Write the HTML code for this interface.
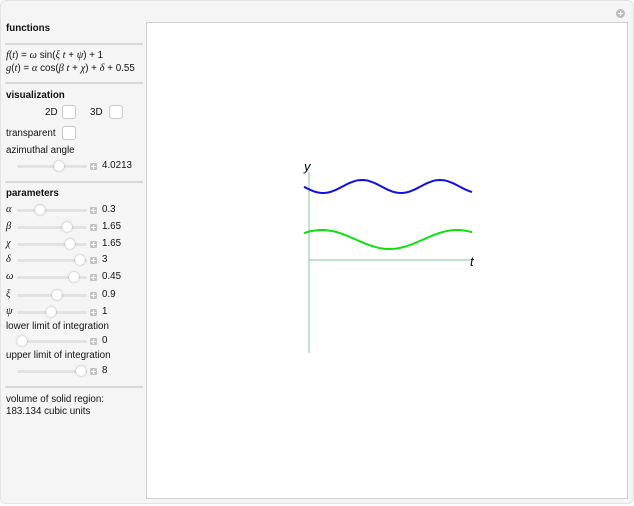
<!DOCTYPE html><html><head><style>
body{margin:0;width:634px;height:506px;background:#fff;font-family:"Liberation Sans",sans-serif;font-size:9.8px;color:#111;position:relative;overflow:hidden}
.frame{position:absolute;left:0;top:0;width:632px;height:502px;background:#f5f5f5;border:1px solid #e2e2e2;border-radius:6px}
.t{position:absolute;white-space:nowrap}
.b{font-weight:bold}
.sep{position:absolute;left:5px;width:138px;height:2px;background:#d8d8d8}
.track{position:absolute;height:3px;background:#e2e2e2;border-radius:2px}
.thumb{position:absolute;width:10px;height:10px;border-radius:50%;background:#fff;box-shadow:0 0 2px rgba(0,0,0,.35)}
.plus{position:absolute;width:7px;height:7px;background:#c4c4c4;border-radius:1px}
.plus:before{content:"";position:absolute;left:3px;top:1px;width:1px;height:5px;background:#fff}
.plus:after{content:"";position:absolute;left:1px;top:3px;width:5px;height:1px;background:#fff}
.cb{position:absolute;width:12px;height:12px;background:#fff;border:1px solid #c8c8c8;border-radius:3px}
.i{font-family:"Liberation Serif",serif;font-style:italic;font-size:10.5px}
.plot{position:absolute;left:146px;top:22px;width:480px;height:475px;background:#fff;border:1px solid #cfcfcf}
</style></head><body>
<div class="frame"></div>
<div style="position:absolute;left:616px;top:9px;width:9px;height:9px;border-radius:50%;background:#bdbdbd"></div>
<div style="position:absolute;left:620px;top:11px;width:1px;height:5px;background:#fff"></div>
<div style="position:absolute;left:618px;top:13px;width:5px;height:1px;background:#fff"></div>
<div class="t b" style="left:6px;top:23px">functions</div>
<div class="sep" style="top:43px"></div>
<div class="t" style="left:6px;top:50px"><span class="i">f</span>(<span class="i">t</span>) = <span class="i">ω</span> sin(<span class="i">ξ t</span> + <span class="i">ψ</span>) + 1</div>
<div class="t" style="left:6px;top:63px"><span class="i">g</span>(<span class="i">t</span>) = <span class="i">α</span> cos(<span class="i">β t</span> + <span class="i">χ</span>) + <span class="i">δ</span> + 0.55</div>
<div class="sep" style="top:82px"></div>
<div class="t b" style="left:6px;top:90px">visualization</div>
<div class="t" style="left:45px;top:107px">2D</div><div class="cb" style="left:62px;top:105px"></div>
<div class="t" style="left:90px;top:107px">3D</div><div class="cb" style="left:109px;top:105px"></div>
<div class="t" style="left:6px;top:128px">transparent</div><div class="cb" style="left:62px;top:126px"></div>
<div class="t" style="left:6px;top:145px">azimuthal angle</div>
<div class="sep" style="top:181px"></div>
<div class="t b" style="left:6px;top:188px">parameters</div>
<div class="sep" style="top:386px"></div>
<div class="t" style="left:6px;top:394px">volume of solid region:</div>
<div class="t" style="left:6px;top:406px">183.134 cubic units</div>
<div class="t" style="left:6px;top:321px">lower limit of integration</div>
<div class="t" style="left:6px;top:350px">upper limit of integration</div>
<div id="sl"></div>
<div class="plot"></div>
<svg style="position:absolute;left:0;top:0" width="634" height="506">
<line x1="309" y1="172" x2="309" y2="353" stroke="#7cc9a0" stroke-width="1"/>
<line x1="309" y1="260" x2="470" y2="260" stroke="#7cc9a0" stroke-width="1"/>
<text x="304" y="171" font-family="Liberation Sans" font-style="italic" font-size="13">y</text>
<text x="470" y="266" font-family="Liberation Sans" font-style="italic" font-size="13">t</text>
<path id="bl" fill="none" stroke="#1010e0" stroke-width="2"/>
<path id="gr" fill="none" stroke="#10e010" stroke-width="2"/>
</svg>
<script>
var b="",g="";for(var x=304;x<=472;x+=2){var yb=186.5-6.5*Math.sin(2*Math.PI*(x-342.5)/78);var yg=239.5-9.5*Math.cos(2*Math.PI*(x-322)/135);b+=(x==304?"M":"L")+x+" "+yb.toFixed(1);g+=(x==304?"M":"L")+x+" "+yg.toFixed(1);}
document.getElementById("bl").setAttribute("d",b);document.getElementById("gr").setAttribute("d",g);
var rows=[[166,59,"4.0213",""],[210,40,"0.3","α"],[227,67,"1.65","β"],[244,70,"1.65","χ"],[260,80,"3","δ"],[277,74,"0.45","ω"],[295,57,"0.9","ξ"],[312,51,"1","ψ"],[341,22,"0","" ],[371,81,"8",""]];
var h="";rows.forEach(function(r){var y=r[0];
if(r[3])h+='<div class="t i" style="left:6px;top:'+(y-6)+'px">'+r[3]+'</div>';
h+='<div class="track" style="left:17px;width:70px;top:'+(y-1)+'px"></div>';
h+='<div class="thumb" style="left:'+(r[1]-5)+'px;top:'+(y-5)+'px"></div>';
h+='<div class="plus" style="left:90px;top:'+(y-3)+'px"></div>';
h+='<div class="t" style="left:102px;top:'+(y-6)+'px">'+r[2]+'</div>';});
document.getElementById("sl").innerHTML=h;
</script>
</body></html>
